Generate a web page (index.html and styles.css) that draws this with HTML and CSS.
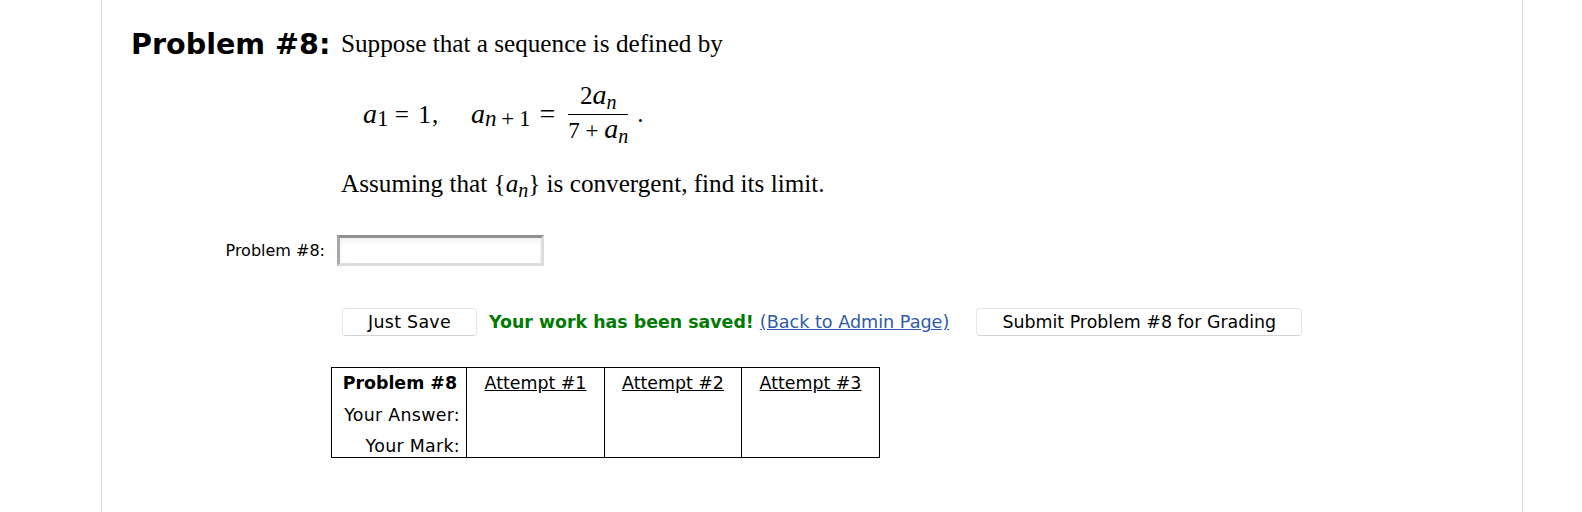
FILE: index.html
```html
<!DOCTYPE html>
<html lang="en">
<head>
    <meta charset="UTF-8">
    <title>Problem #8</title>
    <link rel="stylesheet" href="styles.css">
</head>
<body>
    <div class="page">
        <div class="problem">
            <h2 class="problem-title">Problem #8:</h2>
            <div class="statement">
                <p class="statement-line">Suppose that a sequence is defined by</p>
                <div class="math-block">
                    <span class="math-first"><i>a</i><span class="sub-up">1</span> = <span class="math-one">1</span><span class="math-comma">,</span></span>
                    <span class="math-second"><i>a</i><span class="sub-up"><i>n</i> + 1</span></span>
                    <span class="math-equals">=</span>
                    <span class="fraction">
                        <span class="numerator">2<i>a</i><span class="sub"><i>n</i></span></span>
                        <span class="denominator">7 + <i>a</i><span class="sub"><i>n</i></span></span>
                    </span>
                    <span class="math-dot">.</span>
                </div>
                <p class="statement-line">Assuming that {<i>a</i><span class="sub"><i>n</i></span>} is convergent, find its limit.</p>
            </div>
        </div>

        <div class="answer-row">
            <label class="answer-label" for="answer">Problem #8:</label>
            <input type="text" id="answer" class="answer-input">
        </div>

        <div class="actions">
            <button class="btn btn-save">Just Save</button>
            <span class="saved-msg">Your work has been saved!</span>
            <a href="#" class="admin-link">(Back to Admin Page)</a>
            <button class="btn btn-submit">Submit Problem #8 for Grading</button>
        </div>

        <table class="attempts">
            <tr>
                <th>Problem #8</th>
                <td rowspan="3" class="col-1"><a href="#">Attempt #1</a></td>
                <td rowspan="3" class="col-2"><a href="#">Attempt #2</a></td>
                <td rowspan="3" class="col-3"><a href="#">Attempt #3</a></td>
            </tr>
            <tr><td class="row-label">Your Answer:</td></tr>
            <tr><td class="row-label row-last">Your Mark:</td></tr>
        </table>
    </div>
</body>
</html>
```

FILE: styles.css
```css
html, body {
    margin: 0;
    background-color: #fff;
}
body {
    height: 512px;
    overflow: hidden;
    padding: 0 59px 0 101px;
    font-family: "DejaVu Sans", Verdana, sans-serif;
    color: #000;
}
.page {
    height: 512px;
    border-left: 1px solid #d9d9d9;
    border-right: 1px solid #d9d9d9;
    box-sizing: border-box;
    padding-top: 26px;
}
.problem {
    display: flex;
    align-items: flex-start;
    padding-left: 29px;
}
.problem-title {
    margin: 0;
    width: 210px;
    font-size: 28.6px;
    line-height: 36px;
    font-weight: bold;
    white-space: nowrap;
}
.statement {
    font-family: "Liberation Serif", "Times New Roman", serif;
    font-size: 25.2px;
}
.statement-line {
    margin: 0;
    line-height: 36px;
    white-space: nowrap;
}
.sub {
    font-size: 20px;
    position: relative;
    top: 5px;
}
.sub-up {
    font-size: 23px;
    position: relative;
    top: 3px;
}
.math-block {
    display: flex;
    align-items: center;
    height: 99px;
    margin: 2px 0 3px 22px;
    white-space: nowrap;
}
.math-block i {
    font-size: 28px;
}
.math-block .sub i,
.math-block .sub-up i {
    font-size: inherit;
}
.math-block .sub-up {
    word-spacing: -1px;
}
.math-first {
    width: 108px;
}
.math-one {
    margin-left: 3px;
}
.math-comma {
    margin-left: 1px;
}
.math-equals {
    margin: 0 13px 0 9px;
    font-size: 28px;
}
.fraction {
    display: inline-flex;
    flex-direction: column;
    align-items: center;
    margin-bottom: 3px;
    line-height: 30px;
}
.numerator {
    border-bottom: 1px solid #000;
    padding: 0 0 2px;
    width: 100%;
    box-sizing: border-box;
    text-align: center;
}
.denominator {
    font-size: 23px;
    line-height: 28px;
}
.math-dot {
    margin-left: 9px;
}
.answer-row {
    display: flex;
    align-items: center;
    margin-top: 32px;
}
.answer-label {
    width: 223px;
    text-align: right;
    font-size: 16px;
}
.answer-input {
    width: 207px;
    height: 31px;
    margin-left: 12px;
    box-sizing: border-box;
    background: #fff;
    border: 3px solid #dcdcdc;
    border-top-color: #909090;
    border-left-color: #a8a8a8;
    box-shadow: inset 0 3px 4px #f0f0f0;
}
.actions {
    display: flex;
    align-items: center;
    margin: 42px 0 0 240px;
    font-size: 17.4px;
    white-space: nowrap;
}
.btn {
    height: 28px;
    padding: 0;
    font-family: inherit;
    font-size: inherit;
    color: #000;
    background: #fff;
    border: 1px solid #e6e6e6;
    border-bottom-color: #d4d4d4;
    border-radius: 4px;
}
.btn-save {
    width: 135px;
    letter-spacing: 0.3px;
}
.saved-msg {
    margin-left: 12px;
    font-weight: bold;
    color: #007a00;
}
.admin-link {
    margin-left: 6px;
    font-size: 17.6px;
    color: #2d5ba8;
}
.btn-submit {
    width: 326px;
    margin-left: 27px;
}
.attempts {
    margin: 31px 0 0 229px;
    border-collapse: collapse;
    border: 1px solid #000;
    font-size: 17.4px;
}
.attempts th {
    width: 125px;
    padding: 0 9px 0 0;
    height: 30px;
    text-align: right;
    border-right: 1px solid #000;
    font-weight: bold;
}
.attempts td {
    vertical-align: top;
    text-align: center;
    padding: 5px 0 0;
    border-right: 1px solid #000;
}
.attempts td a {
    color: #000;
}
.attempts .row-label {
    width: 134px;
    padding: 4px 6px 0 0;
    height: 30px;
    box-sizing: border-box;
    text-align: right;
    vertical-align: middle;
    letter-spacing: 0.3px;
}
.attempts .row-last {
    height: 29px;
    padding-top: 7px;
}
.col-1 { width: 137px; }
.col-2 { width: 136px; }
.col-3 { width: 137px; }
```
